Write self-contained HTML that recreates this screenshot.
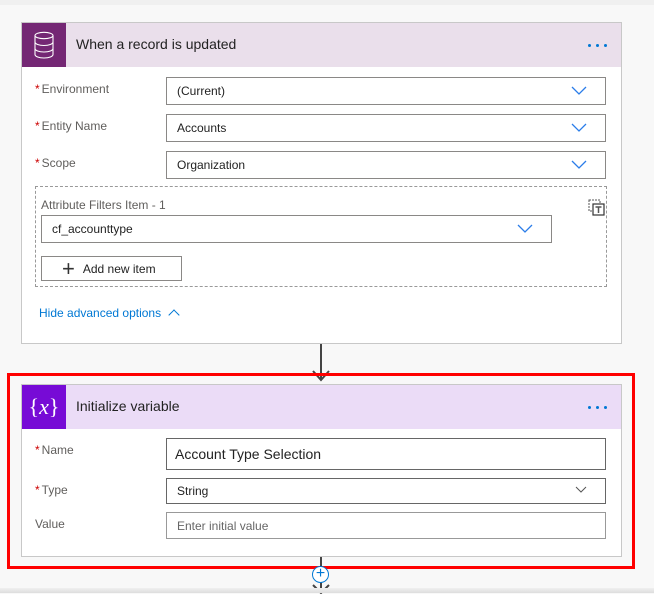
<!DOCTYPE html><html><head><style>
body{margin:0;width:654px;height:593px;background:#f8f8f8;font-family:"Segoe UI","Liberation Sans",sans-serif;position:relative;overflow:hidden}
.a{position:absolute;box-sizing:border-box}
.card{background:#fff;border:1px solid #c8c8c8}
.lbl{font-size:12px;color:#605e5c}
.lbl b{color:#c00;font-weight:normal;margin-right:2px}
.in{border:1px solid #8a8886;background:#fff;font-size:12px;color:#222;padding-left:10px;display:flex;align-items:center}
.chev{position:absolute;right:18px;top:50%;margin-top:-5px}
.dots{position:absolute;width:20px;height:4px}
.dots i{position:absolute;top:0;width:3px;height:3px;background:#0078d4;border-radius:50%}
</style></head><body>
<div class="a" style="left:0;top:0;width:654px;height:5px;background:#f0f0f0"></div>
<div class="a card" style="left:21px;top:22px;width:601px;height:322px"></div>
<div class="a" style="left:22px;top:23px;width:599px;height:44px;background:#eadfeb"></div>
<div class="a" style="left:22px;top:23px;width:44px;height:44px;background:#742774"></div>
<svg class="a" style="left:33px;top:31px" width="22" height="29" viewBox="0 0 22 29" fill="none" stroke="#fff" stroke-width="1.1"><ellipse cx="11" cy="4.5" rx="9" ry="3.2"/><path d="M2 4.5v19c0 2 4 3.5 9 3.5s9-1.5 9-3.5v-19M2 11c0 2 4 3.5 9 3.5s9-1.5 9-3.5M2 17.5c0 2 4 3.5 9 3.5s9-1.5 9-3.5"/></svg>
<div class="a" style="left:76px;top:36px;font-size:14px;color:#222">When a record is updated</div>
<div class="dots" style="left:588px;top:44px"><i style="left:0"></i><i style="left:8px"></i><i style="left:16px"></i></div>
<div class="a lbl" style="left:35px;top:82px"><b>*</b>Environment</div>
<div class="a lbl" style="left:35px;top:119px"><b>*</b>Entity Name</div>
<div class="a lbl" style="left:35px;top:156px"><b>*</b>Scope</div>
<div class="a in" style="left:166px;top:77px;width:440px;height:28px">(Current)<svg class="chev" width="16" height="9"><path d="M1 1l7 7 7-7" stroke="#2b7de9" stroke-width="1.3" fill="none"/></svg></div>
<div class="a in" style="left:166px;top:114px;width:440px;height:28px">Accounts<svg class="chev" width="16" height="9"><path d="M1 1l7 7 7-7" stroke="#2b7de9" stroke-width="1.3" fill="none"/></svg></div>
<div class="a in" style="left:166px;top:151px;width:440px;height:28px">Organization<svg class="chev" width="16" height="9"><path d="M1 1l7 7 7-7" stroke="#2b7de9" stroke-width="1.3" fill="none"/></svg></div>
<div class="a" style="left:35px;top:186px;width:572px;height:101px;border:1px dashed #999"></div>
<div class="a lbl" style="left:41px;top:198px">Attribute Filters Item - 1</div>
<svg class="a" style="left:588px;top:199px" width="17" height="17"><rect x="1" y="1" width="11" height="11" fill="none" stroke="#555" stroke-dasharray="2 1"/><rect x="5" y="5" width="11" height="11" fill="#fff" stroke="#333" stroke-width="1.2"/><path d="M7.5 8h6M10.5 8v6" stroke="#555" stroke-width="1.5"/></svg>
<div class="a in" style="left:41px;top:215px;width:511px;height:28px">cf_accounttype<svg class="chev" width="16" height="9"><path d="M1 1l7 7 7-7" stroke="#2b7de9" stroke-width="1.3" fill="none"/></svg></div>
<div class="a in" style="left:41px;top:256px;width:141px;height:25px;padding-left:20px;font-size:12px"><span style="font-size:22px;font-weight:300;margin-right:8px;line-height:1;color:#333">+</span>Add new item</div>
<div class="a" style="left:39px;top:306px;font-size:12px;color:#0078d4">Hide advanced options <span style="display:inline-block;width:7px;height:7px;border-left:1px solid #0078d4;border-top:1px solid #0078d4;transform:rotate(45deg);margin-left:6px;position:relative;top:2px"></span></div>
<div class="a" style="left:320px;top:344px;width:2px;height:36px;background:#444"></div>
<svg class="a" style="left:312px;top:370px" width="18" height="12"><path d="M1 1l8 9 8-9" stroke="#444" stroke-width="2" fill="none"/></svg>
<div class="a" style="left:7px;top:373px;width:628px;height:196px;border:3px solid #f00"></div>
<div class="a card" style="left:21px;top:384px;width:601px;height:173px"></div>
<div class="a" style="left:22px;top:385px;width:599px;height:44px;background:#ebdcf7"></div>
<div class="a" style="left:22px;top:385px;width:44px;height:44px;background:#770bd6;color:#fff;font-family:'Liberation Serif',serif;font-size:22px;display:flex;align-items:center;justify-content:center"><span>{<i>x</i>}</span></div>
<div class="a" style="left:76px;top:398px;font-size:14px;color:#222">Initialize variable</div>
<div class="dots" style="left:588px;top:406px"><i style="left:0"></i><i style="left:8px"></i><i style="left:16px"></i></div>
<div class="a lbl" style="left:35px;top:443px"><b>*</b>Name</div>
<div class="a lbl" style="left:35px;top:483px"><b>*</b>Type</div>
<div class="a lbl" style="left:35px;top:517px">Value</div>
<div class="a in" style="left:166px;top:438px;width:440px;height:32px;font-size:14px;border-color:#666;padding-left:8px">Account Type Selection</div>
<div class="a in" style="left:166px;top:478px;width:440px;height:26px;border-color:#666">String<svg class="chev" width="12" height="7"><path d="M1 1l5 5 5-5" stroke="#555" stroke-width="1" fill="none"/></svg></div>
<div class="a in" style="left:166px;top:512px;width:440px;height:27px;color:#666;border-color:#999">Enter initial value</div>
<div class="a" style="left:320px;top:557px;width:2px;height:36px;background:#444"></div>
<svg class="a" style="left:312px;top:584px" width="18" height="10"><path d="M1 1l8 8 8-8" stroke="#444" stroke-width="2" fill="none"/></svg>
<div class="a" style="left:312px;top:566px;width:17px;height:17px;border:1px solid #0078d4;border-radius:50%;background:#fff;color:#0078d4;font-size:16px;line-height:14px;text-align:center">+</div>
<div class="a" style="left:0;top:588px;width:654px;height:5px;background:linear-gradient(#f0f0f0,#ddd)"></div>
</body></html>
